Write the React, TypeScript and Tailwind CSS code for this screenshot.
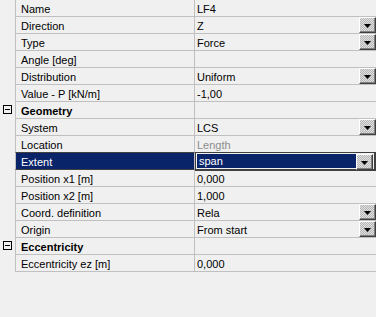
import React from "react"

interface Row {
  label: string
  value?: string
  dropdown?: boolean
  group?: boolean
  muted?: boolean
  selected?: boolean
}

const rows: Row[] = [
  { label: "Name", value: "LF4" },
  { label: "Direction", value: "Z", dropdown: true },
  { label: "Type", value: "Force", dropdown: true },
  { label: "Angle [deg]" },
  { label: "Distribution", value: "Uniform", dropdown: true },
  { label: "Value - P [kN/m]", value: "-1,00" },
  { label: "Geometry", group: true },
  { label: "System", value: "LCS", dropdown: true },
  { label: "Location", value: "Length", muted: true },
  { label: "Extent", value: "span", dropdown: true, selected: true },
  { label: "Position x1 [m]", value: "0,000" },
  { label: "Position x2 [m]", value: "1,000" },
  { label: "Coord. definition", value: "Rela", dropdown: true },
  { label: "Origin", value: "From start", dropdown: true },
  { label: "Eccentricity", group: true },
  { label: "Eccentricity ez [m]", value: "0,000" },
]

function DropButton({ className = "" }: { className?: string }) {
  return (
    <div
      className={
        "flex w-[17px] h-[16px] items-center justify-center border border-t-white border-l-white border-r-[#404040] border-b-[#404040] shadow-[inset_-1px_-1px_0_#808080] [background:repeating-conic-gradient(#b4b4b4_0%_25%,#e2e2e2_0%_50%)_0_0/2px_2px] " +
        className
      }
    >
      <svg width="7" height="4" viewBox="0 0 7 4" className="mt-px">
        <path d="M0 0h7L3.5 4z" fill="#000" />
      </svg>
    </div>
  )
}

function CollapseBox() {
  return (
    <div className="relative mt-[3px] h-[9px] w-[9px] border border-black">
      <div className="absolute left-[1px] top-[3px] h-px w-[5px] bg-black" />
    </div>
  )
}

export default function App() {
  return (
    <div
      className="h-[317px] w-[376px] overflow-hidden bg-[#f0f0f0] text-[11px] text-black"
      style={{ fontFamily: '"Liberation Sans", Arial, sans-serif' }}
    >
      {rows.map((row, i) => {
        const nextSelected = rows[i + 1]?.selected
        return (
          <div key={i} className="flex h-[17px]">
            <div className="flex w-[15px] justify-center">
              {row.group && <CollapseBox />}
            </div>
            <div
              className={
                "w-[180px] border-l border-r border-b border-l-[#c0c0c0] border-r-[#c0c0c0] pl-[5px] leading-[18px] whitespace-nowrap " +
                (row.selected
                  ? "bg-[#0a246a] text-white border-b-[#404040] border-r-[#404040] "
                  : nextSelected
                    ? "border-b-[#404040] "
                    : "border-b-[#c0c0c0] ") +
                (row.group ? "font-bold" : "")
              }
            >
              {row.label}
            </div>
            <div className="relative flex-1 border-b border-b-[#c0c0c0]">
              {row.selected ? (
                <div className="absolute -top-px -bottom-[2px] left-0 right-0 flex border border-[#404040] border-b-2 border-r-2 bg-[#f0f0f0] p-px">
                  <div className="flex flex-1 bg-[#0a246a] pl-[2px] leading-[15px] text-white">
                    {row.value}
                  </div>
                  <DropButton className="h-[15px] w-[15px]" />
                </div>
              ) : (
                <div className="flex h-[16px]">
                  <div
                    className={
                      "flex-1 pl-[2px] leading-[18px] whitespace-nowrap " +
                      (row.muted ? "text-[#8c8c8c]" : "")
                    }
                  >
                    {row.value}
                  </div>
                  {row.dropdown && <DropButton />}
                </div>
              )}
            </div>
          </div>
        )
      })}
    </div>
  )
}
